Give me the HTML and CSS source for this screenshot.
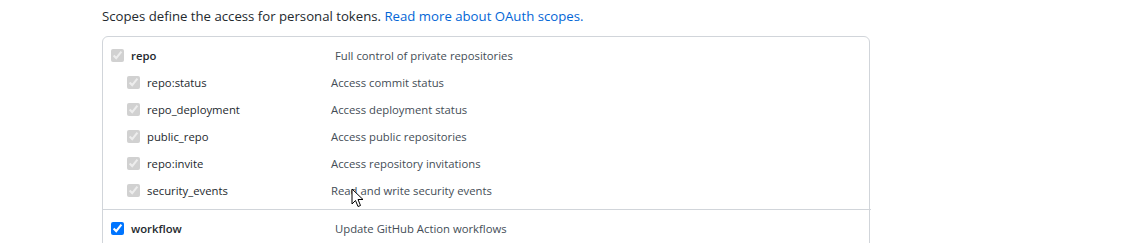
FILE: index.html
```html
<!DOCTYPE html>
<html lang="en">
  <head>
    <meta charset="UTF-8" />
    <title>Scopes</title>
    <link rel="stylesheet" href="styles.css">
  </head>
  <body>
    <div class="page">
      <p class="note">Scopes define the access for personal tokens. <a href="#">Read more about OAuth scopes.</a></p>
      <ul class="scopes">
        <li class="group">
          <div class="row top">
            <label><input type="checkbox" checked disabled> <b>repo</b></label>
            <span class="desc">Full control of private repositories</span>
          </div>
          <div class="row sub">
            <label><input type="checkbox" checked disabled> repo:status</label>
            <span class="desc">Access commit status</span>
          </div>
          <div class="row sub">
            <label><input type="checkbox" checked disabled> repo_deployment</label>
            <span class="desc">Access deployment status</span>
          </div>
          <div class="row sub">
            <label><input type="checkbox" checked disabled> public_repo</label>
            <span class="desc">Access public repositories</span>
          </div>
          <div class="row sub">
            <label><input type="checkbox" checked disabled> repo:invite</label>
            <span class="desc">Access repository invitations</span>
          </div>
          <div class="row sub">
            <label><input type="checkbox" checked disabled> security_events</label>
            <span class="desc cursor-host">Read and write security events
              <svg class="cursor" width="14" height="21" viewBox="0 0 14 21">
                <path d="M1 1 L1 16 L4.5 12.5 L7 18.5 L9.5 17.5 L7 11.5 L12 11.5 Z" fill="#fff" stroke="#000" stroke-width="1"/>
              </svg>
            </span>
          </div>
        </li>
        <li class="group">
          <div class="row top">
            <label><input type="checkbox" checked> <b>workflow</b></label>
            <span class="desc">Update GitHub Action workflows</span>
          </div>
        </li>
      </ul>
    </div>
  </body>
</html>
```

FILE: styles.css
```css
* {
  padding: 0;
  margin: 0;
  box-sizing: border-box;
}
body {
  background: #fff;
  font-family: "Open Sans", "Noto Sans", sans-serif;
  font-size: 11.3px;
  color: #24292e;
}
.page {
  padding-left: 102px;
  width: 870px;
  padding-top: 6px;
}
.note {
  height: 20px;
  line-height: 20px;
  margin-bottom: 10px;
  font-size: 13.2px;
}
.note a {
  color: #0366d6;
  text-decoration: none;
}
ul,
li {
  list-style: none;
}
.scopes {
  border: 1px solid #d1d5da;
  border-radius: 6px;
  border-bottom-left-radius: 0;
  border-bottom-right-radius: 0;
}
.group {
  padding: 5px 0;
}
.group + .group {
  border-top: 1px solid #d1d5da;
  margin: 0 -2px 0 -1px;
  padding-left: 1px;
}
.row {
  height: 27px;
  line-height: 16px;
  display: flex;
  align-items: center;
}
.row label {
  display: flex;
  align-items: center;
  gap: 7px;
}
.row b {
  font-weight: 600;
}
.row input {
  width: 13px;
  height: 13px;
}
.top {
  padding-left: 8px;
}
.top label {
  width: 224px;
}
.sub {
  padding-left: 24px;
}
.sub label {
  width: 204px;
}
.desc {
  color: #444d56;
}
.cursor-host {
  position: relative;
}
.cursor {
  position: absolute;
  left: 20px;
  top: 5px;
}
```
